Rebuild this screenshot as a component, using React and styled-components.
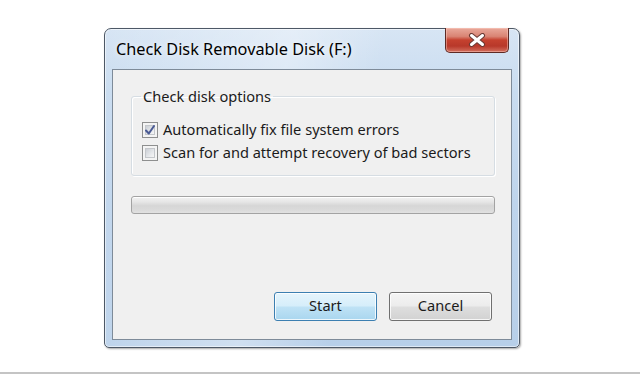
import React from "react";
import styled, { createGlobalStyle } from "styled-components";

const Global = createGlobalStyle`
  html, body { margin: 0; padding: 0; background: #ffffff; }
  body { font-family: "Noto Sans", "Open Sans", sans-serif; }
`;

const Page = styled.div`
  width: 640px;
  height: 374px;
  border-bottom: 2px solid #c4c4c4;
  padding: 28px 0 0 104px;
  box-sizing: border-box;
  overflow: hidden;
`;

const Window = styled.div`
  width: 416px;
  height: 320px;
  box-sizing: border-box;
  border: 1px solid #4d5866;
  border-radius: 7px 7px 5px 5px;
  background:
    linear-gradient(100deg, rgba(255,255,255,0) 0%, rgba(255,255,255,0.35) 40%, rgba(255,255,255,0) 60%),
    linear-gradient(180deg, #d7e5f4 0%, #c9dcf0 20%, #bed4ec 55%, #b7cfe9 100%);
  box-shadow: inset 0 0 0 1px rgba(255,255,255,0.55), 1px 1px 2px rgba(0,0,0,0.35);
  display: flex;
  flex-direction: column;
  padding: 0 7px 7px 7px;
`;

const TitleBar = styled.div`
  height: 40px;
  display: flex;
  align-items: flex-start;
  justify-content: space-between;
  flex-shrink: 0;
`;

const Title = styled.div`
  font-size: 16.3px;
  color: #000;
  padding: 10px 0 0 4px;
  line-height: 21px;
  text-shadow: 0 0 6px rgba(255,255,255,0.9);
`;

const CloseButton = styled.div`
  width: 64px;
  height: 25px;
  margin-top: -1px;
  margin-right: 3px;
  box-sizing: border-box;
  border: 1px solid #5e2a24;
  border-top: none;
  border-radius: 0 0 5px 5px;
  background: linear-gradient(180deg, #e9a99b 0%, #d98474 35%, #c5412f 50%, #b8382a 75%, #d3705f 100%);
  box-shadow: inset 0 0 0 1px rgba(255,210,200,0.45);
  display: flex;
  align-items: center;
  justify-content: center;
`;

const Client = styled.div`
  flex: 1;
  background: #f0f0f0;
  border: 1px solid #7e8b99;
  display: flex;
  flex-direction: column;
  padding: 17px 16px 18px 18px;
`;

const Group = styled.fieldset`
  margin: 0;
  border: 1px solid #d6dde3;
  border-radius: 3px;
  padding: 14px 0 13px 10px;
  display: flex;
  flex-direction: column;
  gap: 4px;
  box-shadow: inset 1px 1px 0 #ffffff, 1px 1px 0 #ffffff;
`;

const Legend = styled.legend`
  font-size: 14.6px;
  line-height: 19px;
  color: #1b1b1b;
  padding: 0 2px;
  margin-left: -1px;
`;

const Row = styled.label`
  display: flex;
  align-items: center;
  gap: 5px;
  font-size: 14.6px;
  line-height: 19px;
  color: #1b1b1b;
`;

const Box = styled.span`
  width: 16px;
  height: 16px;
  box-sizing: border-box;
  border: 1px solid #8e8f8f;
  background: #f4f4f4;
  padding: 2px;
  display: flex;
  flex-shrink: 0;
`;

const BoxInner = styled.span`
  flex: 1;
  border: 1px solid #c4c7cb;
  background: linear-gradient(135deg, #cbcfd5 0%, #e6e8eb 60%, #f6f6f6 100%);
  display: flex;
  align-items: center;
  justify-content: center;
`;

const Progress = styled.div`
  margin-top: 20px;
  height: 18px;
  box-sizing: border-box;
  border: 1px solid #a3a3a3;
  border-radius: 3px;
  background: linear-gradient(180deg, #f2f2f2 0%, #e6e6e6 30%, #d6d6d6 55%, #dadada 80%, #e2e2e2 100%);
  box-shadow: inset 0 1px 0 #ffffff;
`;

const Buttons = styled.div`
  margin-top: auto;
  display: flex;
  justify-content: flex-end;
  gap: 12px;
  padding-right: 3px;
`;

const Button = styled.button`
  width: 103px;
  height: 29px;
  box-sizing: border-box;
  border-radius: 3px;
  font-family: "Noto Sans", "Open Sans", sans-serif;
  font-size: 14.6px;
  line-height: 19px;
  color: #1b1b1b;
  padding: 0 0 2px 0;
  border: 1px solid ${p => (p.$primary ? "#3c7fb1" : "#707070")};
  background: ${p =>
    p.$primary
      ? "linear-gradient(180deg, #e5f4fc 0%, #d6eefa 48%, #bfe2f5 52%, #a9d6ef 100%)"
      : "linear-gradient(180deg, #f4f4f4 0%, #ececec 48%, #dedede 52%, #d2d2d2 100%)"};
  box-shadow: inset 0 0 0 1px rgba(255,255,255,0.8);
`;

function Check({ checked }) {
  return (
    <Box>
      <BoxInner>
        {checked && (
          <svg width="12" height="12" viewBox="0 0 12 12" style={{ margin: -3 }}>
            <path d="M2 6.5 L4.8 9.5 L10 2" fill="none" stroke="#4a5a94" strokeWidth="2" strokeLinecap="round" strokeLinejoin="round" />
          </svg>
        )}
      </BoxInner>
    </Box>
  );
}

export default function App() {
  return (
    <>
      <Global />
      <Page>
        <Window>
          <TitleBar>
            <Title>Check Disk Removable Disk (F:)</Title>
            <CloseButton>
              <svg width="18" height="14" viewBox="0 0 18 14">
                <path d="M3.5 2.5 L14.5 11.5 M14.5 2.5 L3.5 11.5" stroke="#6a3a34" strokeWidth="5" strokeLinecap="round" />
                <path d="M3.5 2.5 L14.5 11.5 M14.5 2.5 L3.5 11.5" stroke="#ffffff" strokeWidth="3" strokeLinecap="round" />
              </svg>
            </CloseButton>
          </TitleBar>
          <Client>
            <Group>
              <Legend>Check disk options</Legend>
              <Row><Check checked />Automatically fix file system errors</Row>
              <Row><Check />Scan for and attempt recovery of bad sectors</Row>
            </Group>
            <Progress />
            <Buttons>
              <Button $primary>Start</Button>
              <Button>Cancel</Button>
            </Buttons>
          </Client>
        </Window>
      </Page>
    </>
  );
}
